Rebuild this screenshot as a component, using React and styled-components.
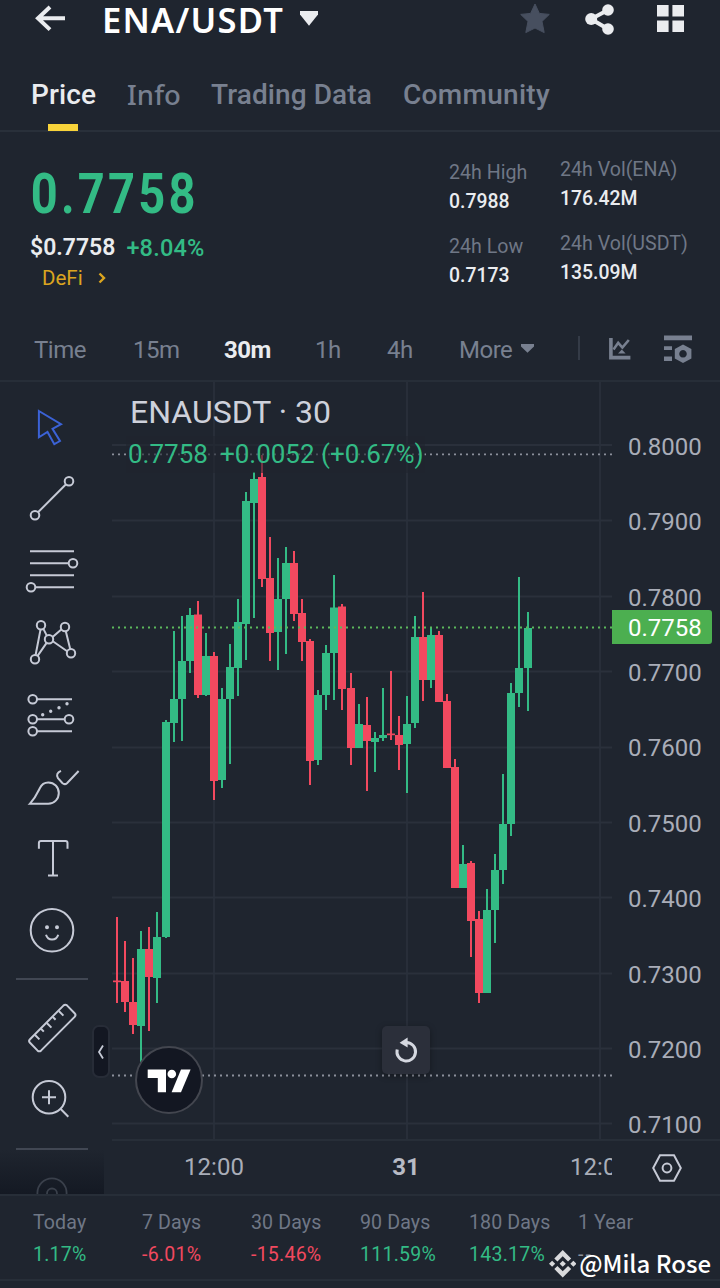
import styled, { createGlobalStyle } from "styled-components";

// x, high, low, body top, body bottom, direction
const candles = [
  [117, 917, 1003, 980.5, 982.2, "down"],
  [125, 941, 1012, 981, 1002, "down"],
  [133, 958, 1034, 1002, 1025, "down"],
  [141, 931, 1062, 949, 1026, "up"],
  [149, 927, 1031, 949, 977, "down"],
  [157, 912, 1003, 937, 978, "up"],
  [166, 720, 938, 722, 937, "up"],
  [174, 631, 742, 699, 723, "up"],
  [182, 616, 741, 661, 699, "up"],
  [190, 608, 673, 615, 661, "up"],
  [198, 601, 698, 614.5, 695, "down"],
  [206, 633, 696, 656, 695, "up"],
  [214, 652, 800, 656, 781, "down"],
  [222, 688, 788, 699, 780, "up"],
  [230, 644, 764, 667, 699, "up"],
  [238, 599, 696, 622, 668, "up"],
  [246, 492, 660, 501, 624, "up"],
  [254, 472, 618, 479, 503, "up"],
  [262, 455, 587, 477, 579, "down"],
  [270, 537, 661, 578, 633, "down"],
  [278, 558, 670, 599, 632, "up"],
  [286, 547, 654, 563, 599, "up"],
  [294, 551, 621, 563, 614, "down"],
  [302, 599, 661, 613, 642, "down"],
  [310, 639, 785, 641, 761, "down"],
  [318, 690, 765, 695, 760, "up"],
  [326, 645, 710, 653, 695, "up"],
  [334, 575, 700, 607.5, 653, "up"],
  [342, 604, 710, 606.5, 689, "down"],
  [351, 673, 765, 688, 748, "down"],
  [359, 704, 748, 724, 748, "up"],
  [367, 697, 791, 725, 741, "down"],
  [375, 732, 772, 738, 742, "up"],
  [383, 688, 741, 735, 738, "up"],
  [391, 671, 740, 733.5, 735.2, "down"],
  [399, 716, 770, 735, 745, "down"],
  [407, 696, 793, 724, 744, "up"],
  [415, 616, 728, 637, 723, "up"],
  [423, 592, 701, 637, 680, "down"],
  [431, 627, 688, 635, 680, "up"],
  [439, 631, 702, 635, 702, "down"],
  [447, 694, 768, 701, 768, "down"],
  [455, 759, 888, 767, 888, "down"],
  [463, 845, 888, 864, 888, "up"],
  [471, 861, 957, 863, 921, "down"],
  [479, 911, 1003, 919, 993, "down"],
  [487, 889, 993, 910, 993, "up"],
  [495, 854, 943, 870, 910, "up"],
  [503, 774, 884, 824, 870, "up"],
  [511, 683, 836, 693, 824, "up"],
  [519, 577, 707, 668, 693, "up"],
  [528, 612, 711, 628, 668, "up"],
];

const prices = [
  "0.8000",
  "0.7900",
  "0.7800",
  "0.7700",
  "0.7600",
  "0.7500",
  "0.7400",
  "0.7300",
  "0.7200",
  "0.7100",
];

const gridRows = [445, 520.5, 596.5, 671.5, 747.5, 822.5, 897.5, 973.5, 1048.5, 1123.5];
const gridColumns = [214, 407, 600];

const periods = [
  { label: "Today", value: "1.17%", trend: "up" },
  { label: "7 Days", value: "-6.01%", trend: "down" },
  { label: "30 Days", value: "-15.46%", trend: "down" },
  { label: "90 Days", value: "111.59%", trend: "up" },
  { label: "180 Days", value: "143.17%", trend: "up" },
  { label: "1 Year", value: "--", trend: "none" },
];

const colors = {
  up: "#33bb85",
  down: "#f2495f",
  none: "#8a909c",
};

export default function App() {
  return (
    <>
      <GlobalStyle />
      <Page>
        <Header>
          <BackIcon viewBox="0 0 32 28">
            <path d="M16 3 L4 14.3 L16 25.6 M4.5 14.3 H31" />
          </BackIcon>
          <Pair>ENA/USDT</Pair>
          <PairCaret viewBox="0 0 18 15">
            <path d="M0 0H18V3.5L9 14.7L0 3.5Z" />
          </PairCaret>
          <HeaderActions>
            <StarIcon viewBox="0 0 30 31">
              <path d="M15 1 L19.4 10.4 L29.3 11.4 L22 18.4 L24.2 29.6 L15 25 L5.8 29.6 L8 18.4 L0.7 11.4 L10.6 10.4Z" />
            </StarIcon>
            <ShareIcon viewBox="0 0 30 32">
              <path d="M23 7 L6 16 L23 26" />
              <circle cx="6.2" cy="16" r="6" />
              <circle cx="23" cy="7" r="5.8" />
              <circle cx="23" cy="26" r="5.8" />
            </ShareIcon>
            <GridIcon viewBox="0 0 27 27">
              <path d="M0 0H11.6V11.4H0ZM15.4 0H27V11.4H15.4ZM0 15.4H11.6V27H0ZM15.4 15.4H27V27H15.4Z" />
            </GridIcon>
          </HeaderActions>
        </Header>

        <Tabs>
          <Tab $active>Price</Tab>
          <Tab $slab>Info</Tab>
          <Tab>Trading Data</Tab>
          <Tab $spacing="0.3px">Community</Tab>
        </Tabs>

        <Summary>
          <div>
            <LastPrice>0.7758</LastPrice>
            <FiatRow>
              <Fiat>$0.7758</Fiat>
              <Change>+8.04%</Change>
            </FiatRow>
            <TagRow>
              DeFi
              <TagArrow viewBox="0 0 8 12">
                <path d="M1.5 1.5 L6 6 L1.5 10.5" />
              </TagArrow>
            </TagRow>
          </div>
          <StatColumn $top="9px">
            <StatLabel>24h High</StatLabel>
            <StatValue>0.7988</StatValue>
            <StatLabel>24h Low</StatLabel>
            <StatValue>0.7173</StatValue>
          </StatColumn>
          <StatColumn $top="6px">
            <StatLabel>24h Vol(ENA)</StatLabel>
            <StatValue>176.42M</StatValue>
            <StatLabel>24h Vol(USDT)</StatLabel>
            <StatValue>135.09M</StatValue>
          </StatColumn>
        </Summary>

        <Intervals>
          <Interval>Time</Interval>
          <Interval>15m</Interval>
          <Interval $active>30m</Interval>
          <Interval>1h</Interval>
          <Interval>4h</Interval>
          <Interval>More</Interval>
          <MoreCaret viewBox="0 0 13 9">
            <path d="M0 0H13V2.5L6.5 8.8L0 2.5Z" />
          </MoreCaret>
          <IntervalDivider />
          <ChartTypeIcon viewBox="0 0 22 22">
            <path d="M1.9 0 V19.6 H21.4" strokeWidth="3.6" />
            <path d="M4.5 11.5 L9.2 4.8 L13.4 9.6 L19.8 2" strokeWidth="2.6" />
            <path d="M9 15.4 L12.8 11.4 L16.6 15.4Z" fill="#788090" stroke="none" />
          </ChartTypeIcon>
          <SettingsIcon viewBox="0 0 29 28">
            <path d="M0 0.5H28V5.3H0ZM0 11.2H8V15H0ZM0 21.6H8V26H0Z" />
            <path
              fillRule="evenodd"
              d="M19 9.6 L27.4 14 V23.4 L19 28 L10.8 23.4 V14ZM19 15a3.8 3.8 0 1 0 0.01 0Z"
            />
          </SettingsIcon>
        </Intervals>

        <ChartArea>
          <Tools>
            <ToolIcon viewBox="0 0 104 72" $active>
              <path d="M38.9 20 L61 33.2 L52.5 37.8 L60 50 L54.3 53.2 L47.5 41 L38.9 46.3Z" />
            </ToolIcon>
            <ToolIcon viewBox="0 0 104 72">
              <circle cx="35" cy="52.3" r="4.3" />
              <circle cx="69" cy="18.3" r="4.3" />
              <path d="M38 49.3 L66 21.3" />
            </ToolIcon>
            <ToolIcon viewBox="0 0 104 72">
              <path d="M30 16.3H74M30 28.3H68.6M30 40.3H74M35.3 52.3H74" />
              <circle cx="73" cy="28.3" r="4.3" />
              <circle cx="31" cy="52.3" r="4.3" />
            </ToolIcon>
            <ToolIcon viewBox="0 0 104 72">
              <path d="M35.6 48 L40.5 22.6M43.4 21.9 L46.8 28.6M37.6 48.9 L46.6 35.9M52.6 30 L61.3 22.4M52.8 34.2 L67.2 44.2M65.8 24.2 L70.2 42" />
              <circle cx="41" cy="18.3" r="4.2" />
              <circle cx="65" cy="20" r="4.2" />
              <circle cx="49" cy="32.3" r="4.2" />
              <circle cx="71" cy="46.3" r="4.2" />
              <circle cx="35" cy="52.3" r="4.2" />
            </ToolIcon>
            <ToolIcon viewBox="0 0 104 72">
              <path d="M37 20.3H72M37 40.3H64.7M37 52.3H72" />
              <circle cx="32.7" cy="20.3" r="4.3" />
              <circle cx="32.7" cy="40.3" r="4.3" />
              <circle cx="69" cy="40.3" r="4.3" />
              <circle cx="32.7" cy="52.3" r="4.3" />
              <path
                d="M42.7 35.7h.01M50.7 32.3h.01M59 28.7h.01M67 24.7h.01"
                strokeWidth="3.4"
                strokeLinecap="round"
              />
            </ToolIcon>
            <ToolIcon viewBox="0 0 104 72">
              <path d="M29.8 52.8 C35.5 46.5 37.5 42 39.8 37.2 C41.6 33.3 44.6 31.4 48.3 31.4 C54.3 31.4 58.8 36 58.8 42 C58.8 48 54.3 52.8 48.3 52.8Z" />
              <path d="M61 19.9 C57.3 21.5 56 24 58 27.2 L62.3 32 C64 33.6 65.4 33.6 67 32.2 L78.6 20" />
            </ToolIcon>
            <ToolIcon viewBox="0 0 104 72">
              <path d="M38.9 25.7V20Q38.9 18 40.9 18H65.5Q67.5 18 67.5 20V25.7M53 18V52.6M48 52.6H58" />
            </ToolIcon>
            <ToolIcon viewBox="0 0 104 72">
              <circle cx="52" cy="35.3" r="21.3" />
              <path d="M47 32.3h.01M57 32.3h.01" strokeWidth="4" strokeLinecap="round" />
              <path d="M46 39.8 Q47.5 44.6 52 44.6 Q56.8 44.6 58.2 39.8" />
            </ToolIcon>
            <ToolDivider />
            <ToolIcon viewBox="0 0 104 72">
              <path d="M63.4 13.6 Q65.3 11.8 67.2 13.6 L74.6 21.2 Q76.4 23 74.6 24.9 L41.2 58.4 Q39.3 60.2 37.4 58.4 L30 50.8 Q28.2 49 30 47.2Z" />
              <path d="M34.8 42.8l4.6 4.6M41 36.8l2.8 2.8M46.8 31l4.6 4.6M52.8 25l2.8 2.8M58.8 19l4.6 4.6" />
            </ToolIcon>
            <ToolIcon viewBox="0 0 104 72">
              <circle cx="49" cy="33.3" r="16.3" />
              <path d="M42 33.3H56M49 26.3V40.3M60.7 45 L68.3 52.7" />
            </ToolIcon>
            <ToolDivider />
            <ToolFade viewBox="0 0 104 44">
              <circle cx="52" cy="43" r="14.6" />
              <circle cx="52" cy="43.5" r="5" />
            </ToolFade>
          </Tools>

          <Plot>
            <Pane>
              <CandleChart viewBox="112 382 500 757">
                {gridRows.map((y) => (
                  <GridLine key={y} x1="112" x2="612" y1={y} y2={y} />
                ))}
                {gridColumns.map((x) => (
                  <GridLine key={x} x1={x} x2={x} y1="382" y2="1139" />
                ))}
                {candles.map(([x, high, low, top, bottom, dir]) => (
                  <g key={x} fill={colors[dir]}>
                    <rect x={x - 1} y={high} width="2" height={low - high} />
                    <rect x={x - 4} y={top} width="8" height={bottom - top} />
                  </g>
                ))}
                <DottedLine x1="112" x2="612" y1="454.3" y2="454.3" />
                <DottedLine x1="112" x2="612" y1="627.5" y2="627.5" $current />
                <DottedLine x1="112" x2="612" y1="1075.5" y2="1075.5" />
              </CandleChart>
              <Legend>
                <LegendTitle>ENAUSDT · 30</LegendTitle>
                <LegendValues>
                  <span>0.7758</span>
                  <span>+0.0052 (+0.67%)</span>
                </LegendValues>
              </Legend>
              <CollapseHandle>
                <svg width="8" height="16" viewBox="0 0 8 16">
                  <path d="M6 1.5 L2 8 L6 14.5" />
                </svg>
              </CollapseHandle>
              <BrandBadge>
                <svg width="44" height="24" viewBox="0 0 44 24">
                  <path d="M0.7 0.5H19V23.3H10.8V9H0.7Z" />
                  <circle cx="24.8" cy="5" r="4.3" />
                  <path d="M34 0.5H43.6L34 23.3H24.6Z" />
                </svg>
              </BrandBadge>
              <ResetButton>
                <svg width="26" height="28" viewBox="0 0 26 28">
                  <path
                    d="M4.2 13.5 A9.3 9.3 0 1 0 13.6 6.4"
                    fill="none"
                    stroke="#d5d8e0"
                    strokeWidth="3"
                  />
                  <path d="M6.6 6.8 L14.6 1.6 V11.4Z" fill="#d5d8e0" />
                </svg>
              </ResetButton>
            </Pane>
            <PriceAxis>
              {prices.map((price) => (
                <PriceLabel key={price}>{price}</PriceLabel>
              ))}
              <CurrentPrice>0.7758</CurrentPrice>
            </PriceAxis>
            <TimeAxis>
              <TimeLabel>12:00</TimeLabel>
              <TimeLabel $bold>31</TimeLabel>
              <TimeLabel>12:00</TimeLabel>
            </TimeAxis>
            <AxisCorner>
              <svg width="30" height="28" viewBox="0 0 30 28">
                <path d="M8 1.3H22L28.8 14L22 26.7H8L1.2 14Z" />
                <circle cx="15" cy="14" r="4.4" />
              </svg>
            </AxisCorner>
          </Plot>
        </ChartArea>

        <Periods>
          {periods.map(({ label, value, trend }) => (
            <Period key={label}>
              <PeriodLabel>{label}</PeriodLabel>
              <PeriodValue $trend={trend}>{value}</PeriodValue>
            </Period>
          ))}
        </Periods>

        <Watermark>
          <svg width="27.5" height="27.5" viewBox="0 0 24 24">
            <path d="M16.624 13.9202l2.7175 2.7154-7.353 7.353-7.353-7.352 2.7175-2.7164 4.6355 4.6595 4.6356-4.6595zm4.6366-4.6366L24 12l-2.7154 2.7164L18.5682 12l2.6924-2.7164zm-9.272.001l2.7163 2.6914-2.7164 2.7174v-.001L9.2721 12l2.7164-2.7154zm-9.2722-.001L5.4088 12l-2.6914 2.6924L0 12l2.7164-2.7164zM11.9885.0115l7.353 7.329-2.7174 2.7154-4.6356-4.6356-4.6355 4.6595-2.7174-2.7154 7.353-7.353z" />
          </svg>
          <Author>@Mila Rose</Author>
        </Watermark>
      </Page>
    </>
  );
}

const GlobalStyle = createGlobalStyle`
  * {
    box-sizing: border-box;
  }
  body {
    margin: 0;
    background: #1f252f;
    overflow: hidden;
  }
  svg {
    display: block;
    flex-shrink: 0;
  }
`;

const Page = styled.main`
  position: relative;
  width: 720px;
  height: 1288px;
  overflow: hidden;
  background: #1f252f;
  color: #eaecef;
  font-family: Roboto, sans-serif;
  white-space: nowrap;
`;

const Header = styled.header`
  display: flex;
  align-items: center;
  height: 38px;
  padding: 0 36px 0 34px;
`;

const BackIcon = styled.svg`
  width: 32px;
  height: 28px;
  margin-top: -2px;
  fill: none;
  stroke: #eaecef;
  stroke-width: 4;
`;

const Pair = styled.h1`
  margin: 1px 0 0 36px;
  font: 600 34.5px/38px "Noto Sans", sans-serif;
  letter-spacing: 1.25px;
  color: #ffffff;
`;

const PairCaret = styled.svg`
  width: 18px;
  height: 15px;
  margin: -2px 0 0 16px;
  fill: #eaecef;
`;

const HeaderActions = styled.div`
  display: flex;
  align-items: center;
  margin: -1px 0 0 auto;
`;

const StarIcon = styled.svg`
  width: 30px;
  height: 31px;
  margin-right: 35px;
  fill: #474f5f;
  stroke: #474f5f;
  stroke-linejoin: round;
`;

const ShareIcon = styled.svg`
  width: 30px;
  height: 32px;
  margin: 0 42px 0 0;
  fill: #eaecef;

  path {
    fill: none;
    stroke: #eaecef;
    stroke-width: 4;
  }
`;

const GridIcon = styled.svg`
  width: 27px;
  height: 27px;
  fill: #eaecef;
`;

const Tabs = styled.nav`
  display: grid;
  grid-template-columns: 96px 84px 192px auto;
  height: 94px;
  padding: 37px 0 0 31px;
  border-bottom: 2px solid #29303a;
`;

const Tab = styled.div`
  position: relative;
  font-family: ${({ $slab }) => ($slab ? '"Noto Sans"' : "Roboto")}, sans-serif;
  font-size: ${({ $slab }) => ($slab ? "27.5px" : "28px")};
  font-weight: 500;
  line-height: 40px;
  letter-spacing: ${({ $spacing }) => $spacing || "0.1px"};
  color: ${({ $active }) => ($active ? "#eaecef" : "#788090")};

  &::after {
    content: "";
    display: ${({ $active }) => ($active ? "block" : "none")};
    position: absolute;
    left: 17px;
    bottom: -1px;
    width: 30px;
    height: 7px;
    background: #f8d33a;
  }
`;

const Summary = styled.section`
  display: grid;
  grid-template-columns: 419px 111px auto;
  height: 188px;
  padding: 18px 0 0 30px;
`;

const LastPrice = styled.div`
  width: 200px;
  padding: 13px 0 0 1px;
  font-size: 56px;
  font-weight: 700;
  line-height: 62px;
  letter-spacing: 3.8px;
  color: #33bb85;
  transform: scaleX(0.84);
  transform-origin: left;
`;

const FiatRow = styled.div`
  display: flex;
  gap: 11px;
  padding-top: 8px;
  font-size: 23px;
  line-height: 30px;
`;

const Fiat = styled.span`
  font-weight: 600;
`;

const Change = styled.span`
  font-weight: 500;
  font-size: 23.5px;
  letter-spacing: 0.2px;
  color: #33bb85;
`;

const TagRow = styled.div`
  display: flex;
  align-items: center;
  gap: 15px;
  padding: 2px 0 0 12px;
  font-size: 20.5px;
  line-height: 26px;
  color: #dba51f;
`;

const TagArrow = styled.svg`
  width: 8px;
  height: 12px;
  fill: none;
  stroke: #dba51f;
  stroke-width: 2.4;
`;

const StatColumn = styled.dl`
  margin: 0;
  padding-top: ${({ $top }) => $top};
`;

const StatLabel = styled.dt`
  font-size: 19.6px;
  line-height: 28px;
  color: #6f7786;
`;

const StatValue = styled.dd`
  margin: 0 0 17px;
  font-size: 19.4px;
  font-weight: 500;
  line-height: 29px;
`;

const Intervals = styled.nav`
  display: grid;
  grid-template-columns: 99px 91px 91px 72px 72px 62px 57px 31px 55px auto;
  align-items: center;
  height: 60px;
  padding: 0 0 0 34px;
`;

const Interval = styled.div`
  font-size: 24px;
  font-weight: ${({ $active }) => ($active ? 700 : 400)};
  line-height: 30px;
  letter-spacing: -0.5px;
  color: ${({ $active }) => ($active ? "#eaecef" : "#788090")};
`;

const MoreCaret = styled.svg`
  width: 13px;
  height: 9px;
  margin-top: -3px;
  fill: #788090;
`;

const IntervalDivider = styled.div`
  width: 2px;
  height: 24px;
  margin-top: -4px;
  background: #343b47;
`;

const ChartTypeIcon = styled.svg`
  width: 22px;
  height: 22px;
  margin-top: -3px;
  fill: none;
  stroke: #788090;
`;

const SettingsIcon = styled.svg`
  width: 29px;
  height: 28px;
  margin-top: -2px;
  fill: #788090;
`;

const ChartArea = styled.section`
  display: flex;
  height: 814px;
  border-top: 2px solid #272e38;
`;

const Tools = styled.aside`
  display: flex;
  flex-direction: column;
  width: 104px;
  margin-right: 8px;
  padding-top: 9px;
`;

const ToolIcon = styled.svg`
  width: 104px;
  height: 72px;
  fill: none;
  stroke: ${({ $active }) => ($active ? "#3b62d6" : "#c6cad6")};
  stroke-width: 2;
`;

const ToolDivider = styled.hr`
  width: 72px;
  height: 2px;
  margin: 11px 16px 12px;
  border: 0;
  background: #414753;

  & ~ & {
    margin: 12px 16px 0;
  }
`;

const ToolFade = styled.svg`
  width: 104px;
  height: 44px;
  background: linear-gradient(#1f252f, #141923);
  fill: none;
  stroke: #3a404b;
  stroke-width: 1.8;
`;

const Plot = styled.div`
  display: grid;
  grid-template-columns: 500px 108px;
  grid-template-rows: 757px 55px;
`;

const Pane = styled.div`
  position: relative;
`;

const CandleChart = styled.svg`
  width: 500px;
  height: 757px;
`;

const GridLine = styled.line`
  stroke: #2a303b;
  stroke-width: 1.8;
`;

const DottedLine = styled.line`
  stroke: ${({ $current }) => ($current ? "#5cb85c" : "#8b909b")};
  stroke-width: 1.8;
  stroke-dasharray: 2 4;
`;

const Legend = styled.div`
  position: absolute;
  top: 10px;
  left: 14px;
`;

const LegendTitle = styled.div`
  padding-left: 4px;
  font-size: 32px;
  line-height: 41px;
  color: #ced1db;
`;

const LegendValues = styled.div`
  display: flex;
  gap: 12px;
  padding: 0 2px;
  font-size: 26px;
  line-height: 37px;
  margin-top: 3px;
  color: #33bb85;
  background: rgba(31, 37, 47, 0.6);
`;

const CollapseHandle = styled.button`
  position: absolute;
  left: -20px;
  top: 643px;
  display: flex;
  align-items: center;
  justify-content: center;
  width: 18px;
  height: 53px;
  padding: 0;
  border: 2px solid #272c37;
  border-radius: 7px;
  background: #131722;

  path {
    fill: none;
    stroke: #c6cad6;
    stroke-width: 1.8;
  }
`;

const BrandBadge = styled.div`
  position: absolute;
  left: 23px;
  top: 664px;
  display: flex;
  align-items: center;
  justify-content: center;
  width: 68px;
  height: 68px;
  padding-top: 2px;
  border: 2px solid #43464f;
  border-radius: 50%;
  background: #131722;

  svg {
    fill: #ffffff;
  }
`;

const ResetButton = styled.button`
  position: absolute;
  left: 270px;
  top: 644px;
  display: flex;
  align-items: center;
  justify-content: center;
  width: 48px;
  height: 48px;
  padding: 0;
  border: 0;
  border-radius: 5px;
  background: #2b2f3a;
  box-shadow: 0 2px 6px rgba(0, 0, 0, 0.35);
`;

const PriceAxis = styled.div`
  position: relative;
  padding: 27px 0 0 16px;
`;

const PriceLabel = styled.div`
  height: 75.36px;
  font-size: 24px;
  line-height: 76px;
  color: #a9adb8;
`;

const CurrentPrice = styled.div`
  position: absolute;
  left: 0;
  top: 228px;
  width: 100px;
  height: 34px;
  padding-left: 16px;
  border-radius: 0 3px 3px 0;
  background: #4caf50;
  font-size: 24px;
  line-height: 36px;
  color: #ffffff;
`;

const TimeAxis = styled.div`
  display: grid;
  grid-template-columns: 192px 192px 196px;
  padding-left: 6px;
  overflow: hidden;
  border-top: 2px solid #272e38;
`;

const TimeLabel = styled.div`
  font-size: 24px;
  font-weight: ${({ $bold }) => ($bold ? 700 : 400)};
  line-height: 53px;
  text-align: center;
  color: ${({ $bold }) => ($bold ? "#b8bbc5" : "#a9adb8")};
`;

const AxisCorner = styled.div`
  display: flex;
  align-items: center;
  justify-content: center;
  padding-left: 2px;
  border-top: 2px solid #272e38;

  svg {
    fill: none;
    stroke: #c6cad6;
    stroke-width: 2;
  }
`;

const Periods = styled.section`
  display: grid;
  grid-template-columns: repeat(6, 109px);
  height: 87px;
  padding: 13px 0 0 33px;
  border-top: 2px solid #272e38;
  border-bottom: 2px solid #272e38;
`;

const Period = styled.div`
  display: flex;
  flex-direction: column;
  gap: 4px;
`;

const PeriodLabel = styled.span`
  font-size: 19.6px;
  line-height: 28px;
  letter-spacing: 0.1px;
  color: #6f7786;
`;

const PeriodValue = styled.span`
  font-size: 19.5px;
  line-height: 28px;
  letter-spacing: ${({ $trend }) => ($trend === "none" ? "2px" : "0.25px")};
  color: ${({ $trend }) => colors[$trend]};
`;

const Watermark = styled.div`
  position: absolute;
  right: 9px;
  bottom: 9px;
  display: flex;
  align-items: center;
  gap: 3px;
  color: #ffffff;

  svg {
    fill: #d9dadc;
  }
`;

const Author = styled.span`
  margin-top: -2px;
  font: 500 24px/32px "Noto Sans CJK SC", sans-serif;
`;
